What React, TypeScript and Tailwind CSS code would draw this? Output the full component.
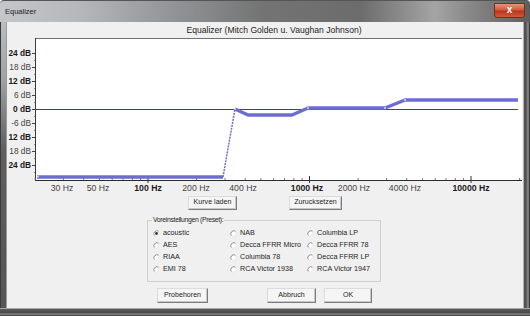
import React from 'react';

// log scale for the frequency axis (100 Hz at x=148, one decade ~161px)
const fx = (f: number) => 148 + 161.5 * Math.log10(f / 100);

const yLabels = [
  { y: 53, text: '24 dB', bold: true },
  { y: 67, text: '18 dB', bold: false },
  { y: 81, text: '12 dB', bold: true },
  { y: 95, text: '6 dB', bold: false },
  { y: 109, text: '0 dB', bold: true },
  { y: 123, text: '-6 dB', bold: false },
  { y: 137, text: '12 dB', bold: true },
  { y: 151, text: '18 dB', bold: false },
  { y: 165, text: '24 dB', bold: true },
];

const xLabels = [
  { x: 62, text: '30 Hz', bold: false },
  { x: 98, text: '50 Hz', bold: false },
  { x: 148, text: '100 Hz', bold: true },
  { x: 196, text: '200 Hz', bold: false },
  { x: 243, text: '400 Hz', bold: false },
  { x: 307, text: '1000 Hz', bold: true },
  { x: 354, text: '2000 Hz', bold: false },
  { x: 405, text: '4000 Hz', bold: false },
  { x: 471, text: '10000 Hz', bold: true },
];

const minorFreqs = [
  20, 30, 40, 50, 60, 70, 80, 90, 200, 300, 400, 500, 600, 700, 800, 900, 2000,
  3000, 4000, 5000, 6000, 7000, 8000, 9000, 20000,
];
const majorFreqs = [100, 1000, 10000];

const presets = [
  ['acoustic', 'NAB', 'Columbia LP'],
  ['AES', 'Decca FFRR Micro', 'Decca FFRR 78'],
  ['RIAA', 'Columbia 78', 'Decca FFRR LP'],
  ['EMI 78', 'RCA Victor 1938', 'RCA Victor 1947'],
];

function Radio({ label, checked }: { label: string; checked?: boolean }) {
  return (
    <div className="flex items-center h-[12px]">
      <svg width="7" height="7" viewBox="0 0 7 7" className="shrink-0">
        <circle cx="3.5" cy="3.5" r="3" fill="#fff" />
        <path d="M1.4 5.6 A3 3 0 0 1 5.6 1.4" stroke="#8a8a8a" fill="none" strokeWidth="1" />
        <path d="M5.6 1.4 A3 3 0 0 1 1.4 5.6" stroke="#e2e2e2" fill="none" strokeWidth="1" />
        {checked && <circle cx="3.5" cy="3.5" r="1.4" fill="#333" />}
      </svg>
      <span className="ml-[3px] whitespace-nowrap text-[7.2px]">{label}</span>
    </div>
  );
}

function WinButton({ label, className }: { label: string; className: string }) {
  return (
    <div
      className={`${className} flex items-center justify-center bg-[#f5f5f5] border border-[#dcdcdc] border-r-[#7c7c7c] border-b-[#7c7c7c] shadow-[inset_-1px_-1px_0_#c8c8c8] whitespace-nowrap text-[7.1px]`}
    >
      {label}
    </div>
  );
}

function Chart() {
  return (
    <svg width="516" height="159" viewBox="7 37 516 159" className="block">
      {/* plot area */}
      <rect x="35" y="38" width="487" height="142" fill="#fff" />
      <line x1="35" y1="38.5" x2="522" y2="38.5" stroke="#707070" />
      <line x1="35.5" y1="38" x2="35.5" y2="181" stroke="#3a3a3a" />
      <line x1="35" y1="180.5" x2="522" y2="180.5" stroke="#2c2c2c" />

      {/* y ticks + labels */}
      {yLabels.map((l) => (
        <g key={l.y}>
          <line x1="32" y1={l.y + 0.5} x2="35" y2={l.y + 0.5} stroke="#444" />
          <line x1="34" y1={l.y + 7.5} x2="35" y2={l.y + 7.5} stroke="#888" />
          <text
            x="31"
            y={l.y + 3}
            fontSize="8.3"
            textAnchor="end"
            fontWeight={l.bold ? 700 : 400}
            fill={l.bold ? '#1a1a1a' : '#444'}
          >
            {l.text}
          </text>
        </g>
      ))}

      {/* x ticks */}
      {minorFreqs.map((f) => (
        <line key={f} x1={fx(f)} y1="178" x2={fx(f)} y2="180" stroke="#777" />
      ))}
      {majorFreqs.map((f) => (
        <line key={f} x1={fx(f)} y1="176" x2={fx(f)} y2="183" stroke="#333" />
      ))}
      {xLabels.map((l) => (
        <text
          key={l.text}
          x={l.x}
          y="191"
          fontSize="8.7"
          textAnchor="middle"
          fontWeight={l.bold ? 700 : 400}
          fill={l.bold ? '#1a1a1a' : '#444'}
        >
          {l.text}
        </text>
      ))}

      {/* 0 dB reference */}
      <line x1="36" y1="109.5" x2="518" y2="109.5" stroke="#3e3e98" />

      {/* curve */}
      <polyline
        points="37,177 223,177"
        fill="none"
        stroke="#6c6cd6"
        strokeWidth="3.5"
        strokeLinejoin="round"
      />
      <polyline
        points="223,177 235,109"
        fill="none"
        stroke="#6c6cd6"
        strokeWidth="1.5"
        strokeDasharray="2 1"
      />
      <polyline
        points="235,109 248,115 292,115 308,108 385,108 405,100 518,100"
        fill="none"
        stroke="#6c6cd6"
        strokeWidth="3.5"
        strokeLinejoin="round"
      />
      {[
        [38, 176.5],
        [235, 109],
        [308, 108],
        [385, 108],
        [405, 100],
      ].map(([x, y]) => (
        <circle key={x} cx={x} cy={y} r="1" fill="#d8d8f4" />
      ))}
    </svg>
  );
}

export default function App() {
  return (
    <div className="w-[530px] h-[316px] overflow-hidden flex flex-col font-['Liberation_Sans',Arial,sans-serif] text-[8px] text-[#1e1e1e] leading-none">
      {/* Title bar */}
      <div className="h-[22px] shrink-0 flex items-start bg-[linear-gradient(90deg,#c3c7ca_0%,#b4b8bb_15%,#929598_32%,#737373_50%,#6c6c6c_68%,#a4a4a4_82%,#8a8a8a_88%,#5e5e5e_100%)] border-t border-[#555] rounded-t-[4px]">
        <span className="ml-[5px] mt-[7px] text-[#222] text-[7.5px]">Equalizer</span>
        <div className="ml-auto mr-[5px] mt-[2px] w-[31px] h-[15px] rounded-b-[3px] border border-[#7a2a1a] bg-[linear-gradient(180deg,#e6937f_0%,#d35a3c_45%,#b8361c_55%,#cf5a3a_100%)] flex items-center justify-center">
          <span className="text-white text-[10px] font-bold leading-none -mt-[1px]">x</span>
        </div>
      </div>

      <div className="flex flex-1 min-h-0">
        {/* left frame */}
        <div className="w-[7px] shrink-0 border-l border-[#3a3a3a] bg-[linear-gradient(180deg,#b9bdc0_0%,#9fa3a6_20%,#5e5e5e_45%,#555_100%)] shadow-[inset_-1px_0_0_#9a9a9a]" />

        {/* client area */}
        <div className="flex-1 bg-[#f0f0f0] flex flex-col">
          <div className="h-[15px] shrink-0 flex items-center justify-center pl-[18px] pt-[1px] text-[8.6px]">
            Equalizer (Mitch Golden u. Vaughan Johnson)
          </div>

          <Chart />

          <div className="flex h-[14px] pl-[181px]">
            <WinButton label="Kurve laden" className="w-[49px] h-[14px]" />
            <WinButton label="Zurucksetzen" className="w-[53px] h-[14px] ml-[52px]" />
          </div>

          <fieldset className="ml-[140px] w-[234px] mt-[5px] border border-[#cfcfcf] pl-[5px] pb-[6px] pt-[2px]">
            <legend className="ml-[-1px] px-[1px] leading-[10px] text-[6.8px] tracking-[-0.3px]">
              Voreinstellungen (Preset):
            </legend>
            <div className="grid grid-cols-[77px_77px_1fr]">
              {presets.map((row) =>
                row.map((p) => <Radio key={p} label={p} checked={p === 'acoustic'} />),
              )}
            </div>
          </fieldset>

          <div className="flex h-[15px] mt-[6px] pl-[150px]">
            <WinButton label="Probehoren" className="w-[51px] h-[15px]" />
            <WinButton label="Abbruch" className="w-[49px] h-[15px] ml-[59px]" />
            <WinButton label="OK" className="w-[48px] h-[15px] ml-[8px]" />
          </div>
        </div>

        {/* right frame */}
        <div className="w-[7px] shrink-0 border-r border-[#3a3a3a] bg-[linear-gradient(90deg,#5a5a5a_0%,#4e4e4e_50%,#8a8a8a_80%,#6a6a6a_100%)] shadow-[inset_1px_0_0_#b0b0b0]" />
      </div>

      {/* bottom frame */}
      <div className="h-[8px] shrink-0 bg-[linear-gradient(180deg,#a9a9a9_0%,#a9a9a9_12%,#5a5a5a_13%,#4a4a4a_60%,#8a8a8a_75%,#3a3a3a_100%)]" />
    </div>
  );
}
